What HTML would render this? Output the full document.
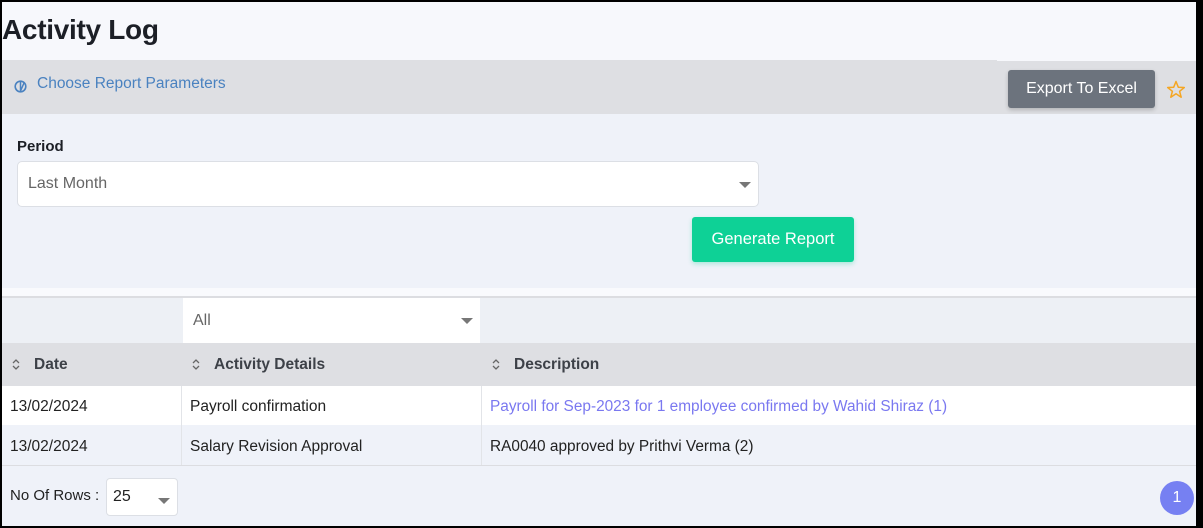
<!DOCTYPE html>
<html><head><style>
*{margin:0;padding:0;box-sizing:border-box}
body{width:1203px;height:528px;background:#000;font-family:"Liberation Sans",sans-serif;position:relative;overflow:hidden}
.a{position:absolute}
.t{white-space:nowrap}
.caret{position:absolute;width:0;height:0;border-left:6px solid transparent;border-right:6px solid transparent;border-top:6px solid #777}
</style></head><body>
<div class="a" style="left:2px;top:2px;width:1194px;height:524px;background:#f7f8fc"></div>
<div class="a t" style="left:2px;top:14px;font-size:28px;font-weight:bold;color:#1c1f26;letter-spacing:-0.3px">Activity Log</div>
<div class="a" style="left:2px;top:60px;width:995px;height:54px;background:#dedfe3"></div>
<div class="a" style="left:997px;top:61px;width:199px;height:54px;background:#dedfe3"></div>
<svg class="a" style="left:14px;top:80px" width="13" height="13" viewBox="0 0 13 13"><circle cx="6.5" cy="6.5" r="5.3" fill="none" stroke="#4a82c0" stroke-width="1.6"/><path d="M6.5 1.5V11.5M6.5 11L10 3" stroke="#4a82c0" stroke-width="1.5" fill="none"/></svg>
<div class="a t" style="left:37px;top:75px;font-size:15.5px;color:#4a82c0">Choose Report Parameters</div>
<div class="a t" style="left:1008px;top:70px;width:147px;height:38px;background:#6c737d;border-radius:3px;color:#fff;font-size:16px;line-height:38px;text-align:center;box-shadow:0 2px 4px rgba(0,0,0,.2)">Export To Excel</div>
<svg class="a" style="left:1166px;top:80px" width="20" height="19" viewBox="0 0 20 19"><path d="M10 1.5L12.3 7.2L18.3 7.5L13.6 11.3L15.2 17.2L10 13.8L4.8 17.2L6.4 11.3L1.7 7.5L7.7 7.2Z" fill="none" stroke="#f5a623" stroke-width="1.5" stroke-linejoin="round"/></svg>
<div class="a" style="left:2px;top:114px;width:1194px;height:174px;background:#eff2f9"></div>
<div class="a t" style="left:17px;top:138px;font-size:15px;font-weight:bold;color:#1c1f26">Period</div>
<div class="a" style="left:17px;top:161px;width:742px;height:46px;background:#fff;border:1px solid #dcdfe5;border-radius:5px"></div>
<div class="a t" style="left:28px;top:175px;font-size:16px;color:#666">Last Month</div>
<div class="caret" style="left:739px;top:182px"></div>
<div class="a t" style="left:692px;top:217px;width:162px;height:45px;background:#0ed196;border-radius:3px;color:#fff;font-size:16.5px;line-height:45px;text-align:center;box-shadow:0 2px 5px rgba(14,209,150,.3)">Generate Report</div>
<div class="a" style="left:2px;top:288px;width:1194px;height:8px;background:#f9fafd"></div>
<div class="a" style="left:2px;top:296px;width:1194px;height:2px;background:#dcdde1"></div>
<div class="a" style="left:2px;top:298px;width:1194px;height:45px;background:#edf0f5"></div>
<div class="a" style="left:183px;top:298px;width:297px;height:45px;background:#fff"></div>
<div class="a t" style="left:193px;top:312px;font-size:16px;color:#666">All</div>
<div class="caret" style="left:461px;top:318px"></div>
<div class="a" style="left:2px;top:343px;width:1194px;height:43px;background:#dedfe3"></div>
<svg class="a" style="left:11px;top:358px" width="10" height="13" viewBox="0 0 10 13"><path d="M2 5L5 2L8 5M2 8L5 11L8 8" fill="none" stroke="#666" stroke-width="1.3"/></svg>
<div class="a t" style="left:34px;top:356px;font-size:15.5px;font-weight:bold;color:#3d4148">Date</div>
<svg class="a" style="left:191px;top:358px" width="10" height="13" viewBox="0 0 10 13"><path d="M2 5L5 2L8 5M2 8L5 11L8 8" fill="none" stroke="#666" stroke-width="1.3"/></svg>
<div class="a t" style="left:214px;top:356px;font-size:15.5px;font-weight:bold;color:#3d4148">Activity Details</div>
<svg class="a" style="left:491px;top:358px" width="10" height="13" viewBox="0 0 10 13"><path d="M2 5L5 2L8 5M2 8L5 11L8 8" fill="none" stroke="#666" stroke-width="1.3"/></svg>
<div class="a t" style="left:514px;top:356px;font-size:15.5px;font-weight:bold;color:#3d4148">Description</div>
<div class="a" style="left:2px;top:386px;width:1194px;height:39px;background:#fff"></div>
<div class="a" style="left:2px;top:425px;width:1194px;height:40px;background:#eff2f9"></div>
<div class="a" style="left:2px;top:465px;width:1194px;height:1px;background:#dcdde1"></div>
<div class="a" style="left:181px;top:386px;width:1px;height:79px;background:#e2e4e8"></div>
<div class="a" style="left:481px;top:386px;width:1px;height:79px;background:#e2e4e8"></div>
<div class="a t" style="left:10px;top:398px;font-size:15.5px;color:#222">13/02/2024</div>
<div class="a t" style="left:190px;top:398px;font-size:15.5px;color:#222">Payroll confirmation</div>
<div class="a t" style="left:490px;top:398px;font-size:15.4px;color:#7a78f0">Payroll for Sep-2023 for 1 employee confirmed by Wahid Shiraz (1)</div>
<div class="a t" style="left:10px;top:438px;font-size:15.5px;color:#222">13/02/2024</div>
<div class="a t" style="left:190px;top:438px;font-size:15.5px;color:#222">Salary Revision Approval</div>
<div class="a t" style="left:490px;top:438px;font-size:15.4px;color:#222">RA0040 approved by Prithvi Verma (2)</div>
<div class="a" style="left:2px;top:466px;width:1194px;height:60px;background:#eff2f9"></div>
<div class="a t" style="left:10px;top:487px;font-size:15px;color:#222">No Of Rows :</div>
<div class="a" style="left:106px;top:478px;width:72px;height:38px;background:#fff;border:1px solid #dcdfe5;border-radius:4px"></div>
<div class="a t" style="left:113px;top:488px;font-size:16px;color:#222">25</div>
<div class="caret" style="left:158px;top:498px"></div>
<div class="a t" style="left:1160px;top:481px;width:34px;height:34px;border-radius:50%;background:#7680f2;color:#fff;font-size:16px;line-height:34px;text-align:center">1</div>
</body></html>
